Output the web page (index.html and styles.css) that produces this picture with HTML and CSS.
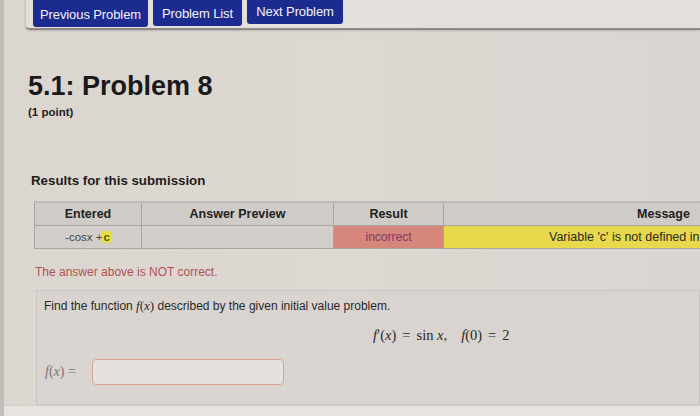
FILE: index.html
```html
<!DOCTYPE html>
<html>
<head>
<meta charset="utf-8">
<link rel="stylesheet" href="styles.css">
</head>
<body>
<div class="page">
  <div class="nav">
    <span class="btn b1">Previous Problem</span>
    <span class="btn b2">Problem List</span>
    <span class="btn b3">Next Problem</span>
  </div>
  <div class="content">
    <h1 class="title">5.1: Problem 8</h1>
    <div class="points">(1 point)</div>
    <h2 class="results">Results for this submission</h2>
    <div class="tablewrap">
      <table class="res">
        <tr class="head">
          <th class="c1">Entered</th>
          <th class="c2">Answer Preview</th>
          <th class="c3">Result</th>
          <th class="c4">Message</th>
        </tr>
        <tr class="row">
          <td class="c1">-cosx +<span class="hl">c</span></td>
          <td class="c2"></td>
          <td class="c3 bad">incorrect</td>
          <td class="c4 msg">Variable 'c' is not defined in</td>
        </tr>
      </table>
    </div>
    <p class="notcorrect">The answer above is NOT correct.</p>
    <div class="problem">
      <p class="find">Find the function <span class="math">f</span><span class="mr">(</span><span class="math">x</span><span class="mr">)</span> described by the given initial value problem.</p>
      <div class="eq"><span class="math">f</span><span class="mr">′(</span><span class="math">x</span><span class="mr">)</span><span class="op">=</span><span class="mr">sin </span><span class="math">x</span><span class="mr">,</span><span class="sp"></span><span class="math">f</span><span class="mr">(0)</span><span class="op">=</span><span class="mr">2</span></div>
      <div class="answer">
        <span class="lbl"><span class="math">f</span>(<span class="math">x</span>) =</span>
        <span class="input"></span>
      </div>
    </div>
  </div>
  <div class="bottom"></div>
</div>
</body>
</html>
```

FILE: styles.css
```css
html, body {
  margin: 0;
  padding: 0;
  width: 700px;
  height: 416px;
  overflow: hidden;
  background: #dcd6d1;
  font-family: "Liberation Sans", Arial, sans-serif;
  color: #1e1c1c;
}
.page {
  width: 696px;
  height: 416px;
  border-left: 4px solid #c2bdb8;
  background: linear-gradient(90deg, #dcd6d1 0%, #ded8d3 50%, #dbd5d1 100%);
  position: relative;
  overflow: hidden;
}
.nav {
  margin-left: 21px;
  height: 28px;
  background: #e3dfdb;
  border-left: 1px solid #c9c4bf;
  border-bottom: 2px solid #8e8985;
  border-bottom-left-radius: 5px;
  box-shadow: 0 1px 2px rgba(0,0,0,0.15);
  display: flex;
  align-items: flex-start;
  gap: 5px;
  padding-left: 7px;
}
.btn {
  display: flex;
  align-items: center;
  justify-content: center;
  height: 26px;
  background: #1c2b8f;
  color: #f4f4f8;
  font-size: 13px;
  border-radius: 0 0 3px 3px;
  letter-spacing: -0.1px;
}
.b1 { width: 115px; height: 27px; padding-top: 1px; box-sizing: border-box; }
.b2 { width: 89px; height: 26px; }
.b3 { width: 96px; height: 24px; padding-bottom: 2px; box-sizing: border-box; }
.content {
  padding-left: 24px;
}
.title {
  margin: 41px 0 0 0;
  font-size: 27px;
  line-height: 30px;
  font-weight: bold;
  color: #1b1a1a;
}
.points {
  margin-top: 4px;
  font-size: 11.5px;
  font-weight: bold;
  line-height: 14px;
}
.results {
  margin: 54px 0 0 3px;
  font-size: 13.3px;
  line-height: 16px;
  font-weight: bold;
}
.tablewrap {
  margin: 12px 0 0 6px;
  width: 900px;
}
.res {
  border-collapse: collapse;
  width: 850px;
  font-size: 12px;
}
.res th, .res td {
  border: 1px solid #aaa5a0;
  text-align: center;
  padding: 0;
}
.res th {
  height: 22px;
  background: #cfcbc7;
  font-weight: bold;
  font-size: 12.5px;
  color: #222;
  border-top: 2px solid #bfbab5;
}
.res td {
  height: 22px;
  background: #d3cecb;
  color: #4a4848;
  font-size: 11.5px;
}
.c1 { width: 106px; }
.c2 { width: 191px; }
.c3 { width: 109px; }
.c4 { width: auto; }
.hl { background: #e8e23a; color: #5a5a10; font-weight: bold; padding: 0 1px; border-radius: 2px; }
.bad { background: #d6867b !important; color: #7b3c6a !important; font-size: 12px !important; }
.res td.msg {
  background: #e7d84c;
  color: #2b2a22;
  font-size: 12.5px;
  text-align: left;
  padding-left: 105px;
  white-space: nowrap;
}
.notcorrect {
  margin: 16px 0 0 7px;
  font-size: 12px;
  color: #b2504e;
  line-height: 14px;
}
.problem {
  margin: 11px 0 0 8px;
  height: 115px;
  background: #d9d4cf;
  border: 1px solid #cbc6c1;
  box-sizing: border-box;
  padding: 8px 0 0 7px;
  position: relative;
}
.find {
  margin: 0;
  font-size: 12px;
  line-height: 14px;
  color: #2a2828;
}
.math {
  font-family: "Liberation Serif", "Times New Roman", serif;
  font-style: italic;
  font-size: 13px;
}
.mr {
  font-family: "Liberation Serif", "Times New Roman", serif;
  font-size: 13px;
}
.eq {
  margin: 14px 0 0 329px;
  font-size: 14px;
  line-height: 17px;
  color: #2a2828;
  display: flex;
  align-items: baseline;
  white-space: pre;
}
.eq .math, .eq .mr { font-size: 14.5px; }
.eq .op {
  font-family: "Liberation Serif", "Times New Roman", serif;
  font-size: 14.5px;
  margin: 0 6px;
}
.eq .sp { display: inline-block; width: 14px; }
.answer {
  margin-top: 15px;
  display: flex;
  align-items: center;
  gap: 8px;
  padding-left: 1px;
}
.lbl {
  font-family: "Liberation Serif", "Times New Roman", serif;
  font-size: 14px;
  color: #7a7775;
  width: 39px;
}
.lbl .math { color: #7a7775; font-size: 14px; }
.input {
  display: block;
  width: 190px;
  height: 24px;
  border: 1px solid #d9a397;
  border-radius: 4px;
  background: #e4e0dc;
}
.bottom {
  position: absolute;
  left: 0;
  right: 0;
  bottom: 0;
  height: 10px;
  background: #e7e4e0;
  border-top: 1px solid #d2cdc8;
}
```
